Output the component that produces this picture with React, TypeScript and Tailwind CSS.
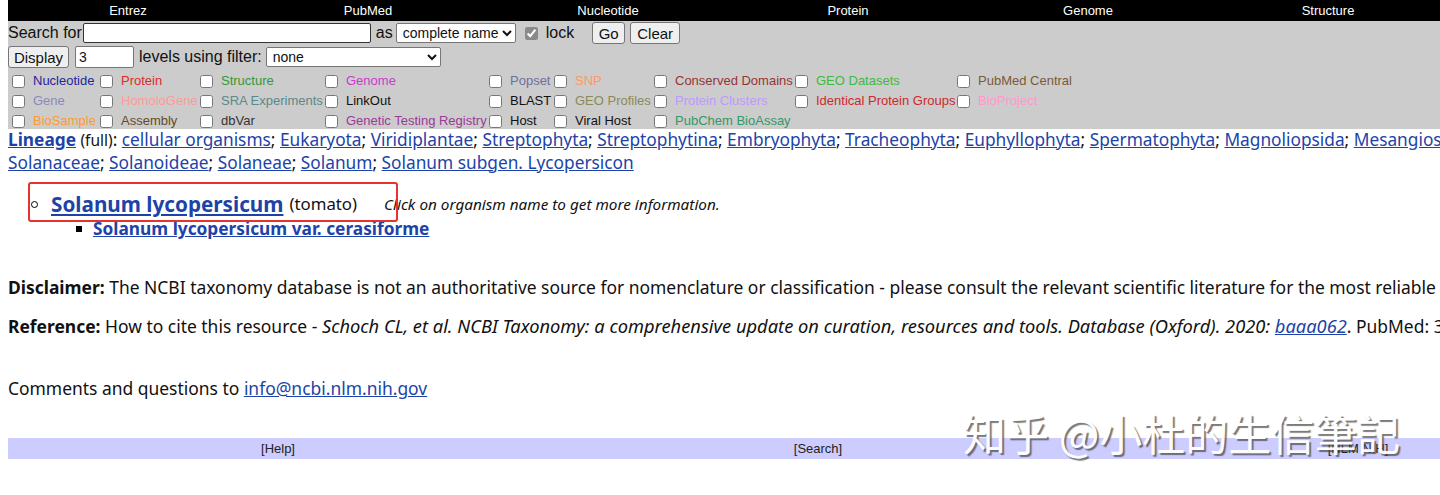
import React from "react";

const navItems = ["Entrez", "PubMed", "Nucleotide", "Protein", "Genome", "Structure"];

interface DbItem {
  label: string;
  color: string;
}

// rows of the database checkbox table, column by column
const dbRows: (DbItem | null)[][] = [
  [
    { label: "Nucleotide", color: "text-[#25259a]" },
    { label: "Protein", color: "text-[#e02a2a]" },
    { label: "Structure", color: "text-[#2f9a3a]" },
    { label: "Genome", color: "text-[#cc39cc]" },
    { label: "Popset", color: "text-[#6f6f9f]" },
    { label: "SNP", color: "text-[#ff9966]" },
    { label: "Conserved Domains", color: "text-[#963434]" },
    { label: "GEO Datasets", color: "text-[#3cbb3c]" },
    { label: "PubMed Central", color: "text-[#7a5a3a]" },
  ],
  [
    { label: "Gene", color: "text-[#8a8ab8]" },
    { label: "HomoloGene", color: "text-[#ff9a9a]" },
    { label: "SRA Experiments", color: "text-[#5a8a8a]" },
    { label: "LinkOut", color: "text-[#111]" },
    { label: "BLAST", color: "text-[#111]" },
    { label: "GEO Profiles", color: "text-[#8a8a5a]" },
    { label: "Protein Clusters", color: "text-[#bb99ff]" },
    { label: "Identical Protein Groups", color: "text-[#cc2a2a]" },
    { label: "BioProject", color: "text-[#ff99cc]" },
  ],
  [
    { label: "BioSample", color: "text-[#ff9933]" },
    { label: "Assembly", color: "text-[#664a22]" },
    { label: "dbVar", color: "text-[#333]" },
    { label: "Genetic Testing Registry", color: "text-[#9a3a9a]" },
    { label: "Host", color: "text-[#111]" },
    { label: "Viral Host", color: "text-[#111]" },
    { label: "PubChem BioAssay", color: "text-[#339966]" },
    null,
    null,
  ],
];

const lineage1 = [
  "cellular organisms",
  "Eukaryota",
  "Viridiplantae",
  "Streptophyta",
  "Streptophytina",
  "Embryophyta",
  "Tracheophyta",
  "Euphyllophyta",
  "Spermatophyta",
  "Magnoliopsida",
  "Mesangiospermae",
  "eudicotyledons",
];

const lineage2 = ["Solanaceae", "Solanoideae", "Solaneae", "Solanum", "Solanum subgen. Lycopersicon"];

function LinkList({ items }: { items: string[] }) {
  return (
    <>
      {items.map((name, i) => (
        <React.Fragment key={name}>
          <a href="#" className="text-[#1d43a8] underline">
            {name}
          </a>
          {i < items.length - 1 && "; "}
        </React.Fragment>
      ))}
    </>
  );
}

export default function App() {
  return (
    <div className="relative w-[1440px] h-[495px] overflow-hidden bg-white text-[#111]">
      <div className="pl-2">
        {/* Top nav */}
        <div className="grid grid-cols-[repeat(6,240px)] bg-black text-white h-[21px] items-center text-[13px] font-['Liberation_Sans',Arial,sans-serif] w-[1432px]">
          {navItems.map((n) => (
            <div key={n} className="text-center">
              {n}
            </div>
          ))}
        </div>

        {/* Search form */}
        <div className="bg-[#cccccc] h-[108px] font-['Liberation_Sans',Arial,sans-serif] text-[16px] text-[#111]">
          <div className="flex items-center h-[24px] whitespace-nowrap">
            <span>Search for</span>
            <input className="ml-[1px] w-[288px] h-[20px] bg-white border border-[#333] rounded-[2px]" />
            <span className="ml-[5px]">as</span>
            <select className="ml-[3px] w-[120px] h-[20px] bg-white border border-[#767676] rounded-[2px] text-[14px] pl-[2px]">
              <option>complete name</option>
            </select>
            <input
              type="checkbox"
              readOnly
              checked
              className="m-0 ml-[9px] w-[13px] h-[13px] accent-[#8a8a8a]"
            />
            <span className="ml-[8px]">lock</span>
            <button className="ml-[18px] w-[33px] h-[22px] bg-[#efefef] border border-[#767676] rounded-[3px] text-[15px]">
              Go
            </button>
            <button className="ml-[5px] w-[50px] h-[22px] bg-[#efefef] border border-[#767676] rounded-[3px] text-[15px]">
              Clear
            </button>
          </div>
          <div className="flex items-center h-[23px] whitespace-nowrap">
            <button className="w-[61px] h-[22px] bg-[#efefef] border border-[#767676] rounded-[3px] text-[15px]">
              Display
            </button>
            <input
              defaultValue="3"
              className="ml-[6px] w-[59px] h-[22px] bg-white border border-[#767676] rounded-[2px] text-[14px] pl-[3px]"
            />
            <span className="ml-[5px]">levels using filter:</span>
            <select className="ml-[4px] w-[175px] h-[20px] bg-white border border-[#767676] rounded-[2px] text-[14px] pl-[2px]">
              <option>none</option>
            </select>
          </div>
          <div className="mt-[3px] grid grid-cols-[88px_100px_125px_164px_65px_100px_141px_162px_1fr] text-[13px]">
            {dbRows.map((row, r) =>
              row.map((item, c) => (
                <div key={`${r}-${c}`} className="flex items-center h-[20px] whitespace-nowrap">
                  {item && (
                    <>
                      <input type="checkbox" className="m-0 ml-[4px] w-[13px] h-[13px]" />
                      <span className={`ml-[8px] ${item.color}`}>{item.label}</span>
                    </>
                  )}
                </div>
              )),
            )}
          </div>
        </div>

        {/* Lineage */}
        <div className="font-['Noto_Sans',sans-serif] text-[17.3px] leading-[22.5px] whitespace-nowrap">
          <div>
            <a href="#" className="font-bold text-[#1d43a8] underline">
              Lineage
            </a>{" "}
            <span className="text-[15.5px]">(full)</span>: <LinkList items={lineage1} />
          </div>
          <div>
            <LinkList items={lineage2} />
          </div>

          {/* Organism list */}
          <div className="mt-[17px] flex items-center h-[27px] pl-[23px]">
            <span className="w-[7px] h-[7px] rounded-full border border-black" />
            <a href="#" className="ml-[13px] font-bold text-[20.7px] text-[#1d43a8] underline">
              Solanum lycopersicum
            </a>
            <span className="ml-[6px] text-[16.8px]">(tomato)</span>
            <span className="ml-[27px] italic text-[15.3px]">Click on organism name to get more information.</span>
          </div>
          <div className="flex items-center h-[22px] pl-[68px]">
            <span className="w-[6px] h-[6px] bg-black" />
            <a href="#" className="ml-[11px] font-bold text-[17.3px] text-[#1d43a8] underline">
              Solanum lycopersicum var. cerasiforme
            </a>
          </div>

          {/* Disclaimer and reference */}
          <div className="mt-[35px] leading-[24px] text-[17.45px]">
            <span className="font-bold">Disclaimer:</span> The NCBI taxonomy database is not an authoritative source for
            nomenclature or classification - please consult the relevant scientific literature for the most reliable
            information.
          </div>
          <div className="mt-[15px] leading-[24px] text-[17.45px]">
            <span className="font-bold">Reference:</span> How to cite this resource -{" "}
            <i className="text-[18.3px]">
              Schoch CL, et al. NCBI Taxonomy: a comprehensive update on curation, resources and tools. Database
              (Oxford). 2020:{" "}
              <a href="#" className="text-[#1d43a8] underline">
                baaa062
              </a>
            </i>
            . PubMed: 32761142 PMCID: PMC7408187.
          </div>
          <div className="mt-[38px] leading-[24px] text-[17.45px]">
            Comments and questions to{" "}
            <a href="#" className="text-[#1d43a8] underline">
              info@ncbi.nlm.nih.gov
            </a>
          </div>
        </div>

        {/* Footer */}
        <div className="mt-[38px] grid grid-cols-[540px_540px_540px] bg-[#ccccff] h-[21px] items-center text-[13px] text-[#222] font-['Liberation_Sans',Arial,sans-serif]">
          <div className="text-center">[Help]</div>
          <div className="text-center">[Search]</div>
          <div className="text-center">[NLM NIH]</div>
        </div>
      </div>

      {/* Red annotation box */}
      <div className="absolute left-[28px] top-[182px] w-[370px] h-[40px] border-[2.5px] border-[#e8322f] rounded-[3px]" />

      {/* Watermark */}
      <div className="absolute left-[963px] top-[407px] text-[43px] leading-[50px] text-white font-['Noto_Sans_CJK_SC',sans-serif] whitespace-nowrap [text-shadow:2px_2px_1px_rgba(70,70,70,0.75)] opacity-95">
        知乎 @小杜的生信筆記
      </div>
    </div>
  );
}
